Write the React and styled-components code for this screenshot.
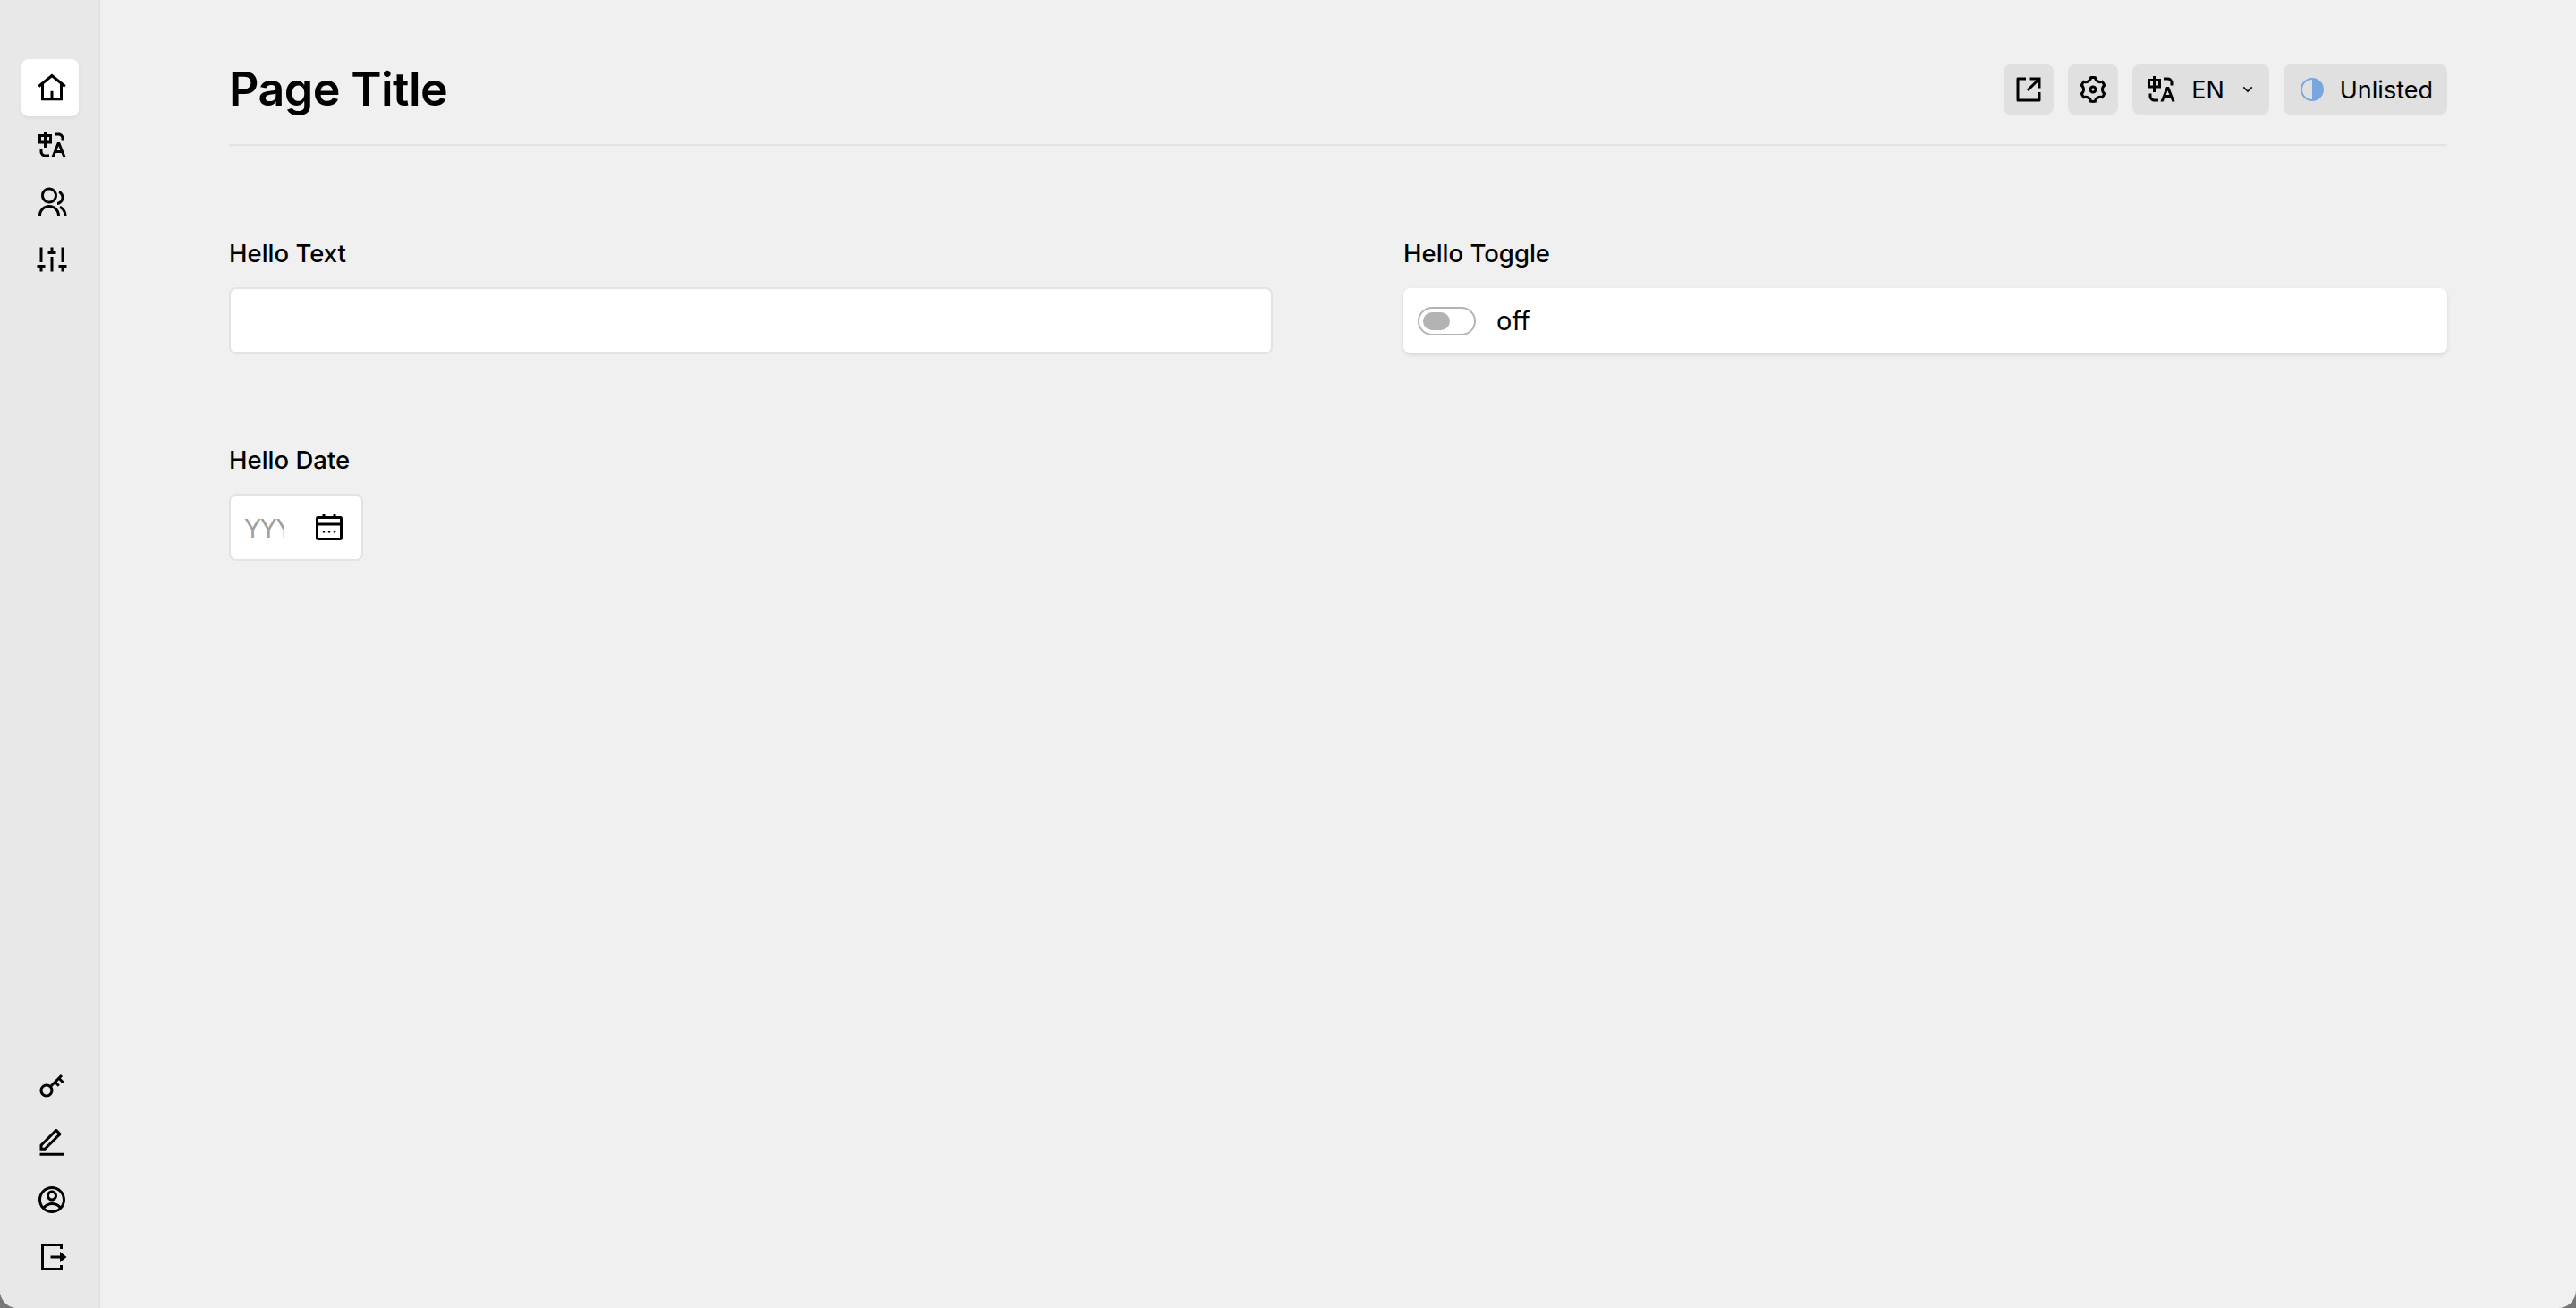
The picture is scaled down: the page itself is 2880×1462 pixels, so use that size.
import React from "react";
import styled, { createGlobalStyle } from "styled-components";
import {
  RiTranslate,
  RiGroupLine,
  RiSoundModuleLine,
  RiKey2Line,
  RiEditLine,
  RiAccountCircleLine,
  RiLogoutBoxRLine,
  RiShareBoxLine,
  RiSettings3Line,
  RiArrowDownSLine,
} from "react-icons/ri";

const GlobalStyle = createGlobalStyle`
  html, body {
    margin: 0;
    padding: 0;
    height: 100%;
    background: #777;
  }
  #root {
    height: 100%;
  }
  * {
    box-sizing: border-box;
  }
`;

const Window = styled.div`
  display: flex;
  width: 2880px;
  height: 1462px;
  overflow: hidden;
  border-radius: 0 0 20px 20px;
  background: #f0f0f0;
  color: #000;
  font-family: Inter, "Liberation Sans", sans-serif;
`;

const Sidebar = styled.nav`
  flex: 0 0 110px;
  display: flex;
  flex-direction: column;
  justify-content: space-between;
  padding: 66px 22px 25px 24px;
  background: #e8e8e8;
  border-right: 2px solid #e3e3e3;
`;

const NavGroup = styled.div`
  display: flex;
  flex-direction: column;
`;

const NavItem = styled.a`
  width: 64px;
  height: 64px;
  display: flex;
  align-items: center;
  justify-content: center;
  padding-left: 3px;
  color: #000;
  border-radius: 8px;
  background: ${(p) => (p.$active ? "#fff" : "transparent")};
  box-shadow: ${(p) => (p.$active ? "0 2px 4px rgba(0,0,0,.06)" : "none")};
  svg {
    width: 36px;
    height: 36px;
  }
`;

const Main = styled.main`
  flex: 1;
  padding: 0 144px;
`;

const Header = styled.header`
  display: flex;
  align-items: center;
  justify-content: space-between;
  padding: 72px 0 33px;
  border-bottom: 2px solid #e3e3e3;
`;

const Title = styled.h1`
  margin: 0;
  font-size: 52px;
  line-height: 56px;
  font-weight: 600;
  letter-spacing: -0.6px;
`;

const Actions = styled.div`
  display: flex;
  gap: 16px;
`;

const ActionButton = styled.button`
  height: 56px;
  width: 56px;
  padding: 0;
  display: flex;
  align-items: center;
  justify-content: center;
  border: none;
  border-radius: 8px;
  background: #e0e0e0;
  color: #000;
  svg {
    width: 36px;
    height: 36px;
  }
`;

const LabelButton = styled(ActionButton)`
  width: auto;
  padding: ${(p) => p.$padding};
  gap: ${(p) => p.$gap}px;
  font: 400 27px Inter, "Liberation Sans", sans-serif;
`;

const Chevron = styled(RiArrowDownSLine)`
  && {
    width: 20px;
    height: 20px;
  }
`;

const Fields = styled.section`
  display: grid;
  grid-template-columns: 1fr 1fr;
  column-gap: 146px;
  row-gap: 100px;
  padding-top: 102px;
`;

const Field = styled.div`
  display: flex;
  flex-direction: column;
  gap: 20px;
`;

const Label = styled.label`
  font-size: 27.5px;
  font-weight: 500;
  line-height: 36px;
`;

const TextInput = styled.input`
  height: 75px;
  width: 100%;
  border: 2px solid #e3e3e3;
  border-radius: 8px;
  background: #fff;
`;

const ToggleBox = styled.div`
  height: 73px;
  margin-top: 1px;
  display: flex;
  align-items: center;
  gap: 23px;
  padding: 0 16px;
  border-radius: 8px;
  background: #fff;
  box-shadow: 0 2px 4px rgba(0, 0, 0, 0.1);
  font-size: 29px;
`;

const Toggle = styled.span`
  width: 65px;
  height: 32px;
  padding: 4px;
  border: 2px solid #b3b3b3;
  border-radius: 16px;
  background: #fff;
  &::before {
    content: "";
    display: block;
    width: 30px;
    height: 20px;
    border-radius: 10px;
    background: #b3b3b3;
  }
`;

const DateBox = styled.div`
  width: 150px;
  height: 75px;
  display: flex;
  align-items: center;
  justify-content: space-between;
  padding: 0 18px 0 15px;
  border: 2px solid #e3e3e3;
  border-radius: 8px;
  background: #fff;
  svg {
    width: 36px;
    height: 36px;
    flex: none;
    margin-top: -2px;
  }
`;

const DatePlaceholder = styled.span`
  width: 45px;
  margin-top: 2px;
  overflow: hidden;
  white-space: nowrap;
  font-size: 28px;
  letter-spacing: -1.3px;
  color: #9e9e9e;
`;

const HomeIcon = () => (
  <svg viewBox="0 0 24 24" fill="none" stroke="currentColor" strokeWidth="2">
    <path d="M2.2 11 12 3l9.8 8" />
    <path d="M5 8.8V20.5h14V8.8" />
    <path d="M12 14.5v6" />
  </svg>
);

const CalendarIcon = () => (
  <svg viewBox="0 0 24 24" fill="none" stroke="currentColor" strokeWidth="2">
    <rect x="3" y="5" width="18" height="16" rx="0.6" />
    <path d="M3 10h18M8 2v4M16 2v4" />
    <path d="M7.2 15.5h1.6M11.2 15.5h1.6M15.2 15.5h1.6" strokeWidth="1.8" />
  </svg>
);

const ContrastIcon = () => (
  <svg viewBox="0 0 26 26" style={{ width: 26, height: 26 }}>
    <circle cx="13" cy="13" r="12" fill="none" stroke="#78a7e0" strokeWidth="2" />
    <path d="M13 1a12 12 0 0 1 0 24z" fill="#78a7e0" />
  </svg>
);

const App = () => {
  return (
    <Window>
      <GlobalStyle />
      <Sidebar>
        <NavGroup>
          <NavItem $active><HomeIcon /></NavItem>
          <NavItem><RiTranslate /></NavItem>
          <NavItem><RiGroupLine /></NavItem>
          <NavItem><RiSoundModuleLine /></NavItem>
        </NavGroup>
        <NavGroup>
          <NavItem><RiKey2Line /></NavItem>
          <NavItem><RiEditLine /></NavItem>
          <NavItem><RiAccountCircleLine /></NavItem>
          <NavItem><RiLogoutBoxRLine /></NavItem>
        </NavGroup>
      </Sidebar>
      <Main>
        <Header>
          <Title>Page Title</Title>
          <Actions>
            <ActionButton><RiShareBoxLine /></ActionButton>
            <ActionButton><RiSettings3Line /></ActionButton>
            <LabelButton $padding="0 14px" $gap={16}>
              <RiTranslate />
              EN
              <Chevron />
            </LabelButton>
            <LabelButton $padding="0 16px 0 19px" $gap={18}>
              <ContrastIcon />
              Unlisted
            </LabelButton>
          </Actions>
        </Header>
        <Fields>
          <Field>
            <Label>Hello Text</Label>
            <TextInput />
          </Field>
          <Field>
            <Label>Hello Toggle</Label>
            <ToggleBox>
              <Toggle />
              off
            </ToggleBox>
          </Field>
          <Field>
            <Label>Hello Date</Label>
            <DateBox>
              <DatePlaceholder>YYYY-MM-DD</DatePlaceholder>
              <CalendarIcon />
            </DateBox>
          </Field>
        </Fields>
      </Main>
    </Window>
  );
};

export default App;
